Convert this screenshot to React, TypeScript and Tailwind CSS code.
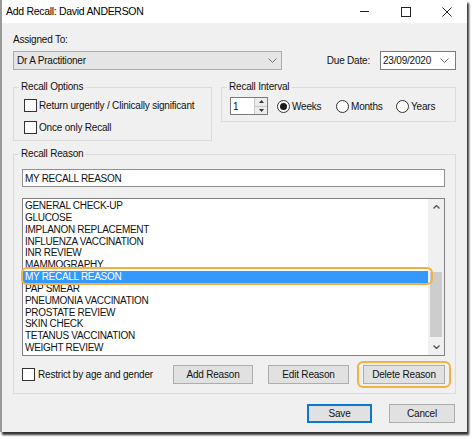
import React from "react";

const items = [
  "GENERAL CHECK-UP",
  "GLUCOSE",
  "IMPLANON REPLACEMENT",
  "INFLUENZA VACCINATION",
  "INR REVIEW",
  "MAMMOGRAPHY",
  "MY RECALL REASON",
  "PAP SMEAR",
  "PNEUMONIA VACCINATION",
  "PROSTATE REVIEW",
  "SKIN CHECK",
  "TETANUS VACCINATION",
  "WEIGHT REVIEW",
];

function Chevron({ color = "#707070" }: { color?: string }) {
  return (
    <svg width="9" height="5" viewBox="0 0 9 5" className="block">
      <polyline points="0.5,0.5 4.5,4.5 8.5,0.5" fill="none" stroke={color} strokeWidth="1" />
    </svg>
  );
}

function Checkbox() {
  return <div className="w-[13px] h-[13px] border border-[#333333] bg-white shrink-0" />;
}

function Radio({ checked }: { checked?: boolean }) {
  return (
    <div className="w-[13px] h-[13px] rounded-full border border-[#333333] bg-white shrink-0 flex items-center justify-center">
      {checked && <div className="w-[7px] h-[7px] rounded-full bg-[#1a1a1a]" />}
    </div>
  );
}

function Button({ label, w, primary }: { label: string; w: string; primary?: boolean }) {
  return (
    <div
      className={`${w} h-[19px] bg-[#e1e1e1] flex items-center justify-center text-[10px] leading-[12px] text-[#111] ${
        primary ? "border-2 border-[#0a78d7]" : "border border-[#adadad]"
      }`}
    >
      {label}
    </div>
  );
}

export default function App() {
  return (
    <div className="w-[474px] h-[439px] bg-white overflow-hidden [font-family:'Liberation_Sans',Arial,sans-serif] tracking-[-0.2px] text-[#111]">
      <div className="w-[467px] h-[432px] border-l-2 border-[#9a9a9a] flex flex-col shadow-[2px_3px_2px_rgba(0,0,0,0.8)]">
        {/* Title bar */}
        <div className="h-[23px] bg-white flex items-center shrink-0">
          <div className="pl-[4px] text-[10.5px] tracking-[-0.3px] text-black flex-1">Add Recall: David ANDERSON</div>
          <div className="flex h-full">
            <div className="w-[41px] flex items-center justify-center">
              <div className="w-[9px] h-[1px] bg-[#222]" />
            </div>
            <div className="w-[41px] flex items-center justify-center">
              <div className="w-[10px] h-[10px] border border-[#222]" />
            </div>
            <div className="w-[41px] flex items-center justify-center">
              <svg width="10" height="10" viewBox="0 0 10 10" className="block">
                <path d="M0.5 0.5 L9.5 9.5 M9.5 0.5 L0.5 9.5" stroke="#222" strokeWidth="1" />
              </svg>
            </div>
          </div>
        </div>

        {/* Body */}
        <div className="flex-1 bg-[#f0f0f0] pl-[11px] pr-[11px] flex flex-col text-[10px]">
          <div className="mt-[10px] h-[14px] leading-[14px]">Assigned To:</div>

          <div className="mt-[4px] h-[19px] flex items-center">
            <div className="w-[269px] h-[19px] bg-[#e5e5e5] border border-[#adadad] flex items-center justify-between pl-[3px] pr-[4px]">
              <span>Dr A Practitioner</span>
              <Chevron />
            </div>
            <div className="flex-1" />
            <div className="mr-[10px]">Due Date:</div>
            <div className="w-[76px] h-[19px] bg-white border border-[#7a7a7a] flex items-center justify-between pl-[2px] pr-[6px]">
              <span>23/09/2020</span>
              <Chevron />
            </div>
          </div>

          <div className="mt-[10px] flex items-start">
            <fieldset className="w-[199px] h-[61px] border border-[#dcdcdc]">
              <legend className="ml-[5px] px-[2px] leading-[14px]">Recall Options</legend>
              <div className="pl-[10px]">
                <div className="mt-[5px] h-[13px] flex items-center">
                  <Checkbox />
                  <span className="ml-[2px]">Return urgently / Clinically significant</span>
                </div>
                <div className="mt-[9px] h-[13px] flex items-center">
                  <Checkbox />
                  <span className="ml-[2px]">Once only Recall</span>
                </div>
              </div>
            </fieldset>

            <fieldset className="ml-[9px] flex-1 h-[42px] border border-[#dcdcdc]">
              <legend className="ml-[5px] px-[2px] leading-[14px]">Recall Interval</legend>
              <div className="pl-[8px] mt-[3px] flex items-center">
                <div className="w-[38px] h-[18px] bg-white border border-[#7a7a7a] flex">
                  <div className="flex-1 pl-[2px] flex items-center">1</div>
                  <div className="w-[13px] flex flex-col border-l border-[#c8c8c8]">
                    <div className="flex-1 bg-[#ececec] border-b border-[#c8c8c8] flex items-center justify-center">
                      <svg width="5" height="3" viewBox="0 0 5 3" className="block">
                        <polygon points="0,3 2.5,0 5,3" fill="#333" />
                      </svg>
                    </div>
                    <div className="flex-1 bg-[#ececec] flex items-center justify-center">
                      <svg width="5" height="3" viewBox="0 0 5 3" className="block">
                        <polygon points="0,0 2.5,3 5,0" fill="#333" />
                      </svg>
                    </div>
                  </div>
                </div>
                <div className="ml-[9px] w-[59px] flex items-center">
                  <Radio checked />
                  <span className="ml-[2px]">Weeks</span>
                </div>
                <div className="w-[60px] flex items-center">
                  <Radio />
                  <span className="ml-[2px]">Months</span>
                </div>
                <div className="flex items-center">
                  <Radio />
                  <span className="ml-[2px]">Years</span>
                </div>
              </div>
            </fieldset>
          </div>

          <fieldset className="mt-[6px] h-[247px] border border-[#dcdcdc]">
            <legend className="ml-[5px] px-[2px] leading-[14px]">Recall Reason</legend>
            <div className="pl-[8px] flex flex-col">
              <div className="mt-[8px] w-[423px] h-[18px] bg-white border border-[#8f8f8f] flex items-center pl-[2px] tracking-[-0.3px]">
                MY RECALL REASON
              </div>

              <div className="mt-[11px] w-[423px] h-[158px] bg-white border border-[#828282] flex relative">
                <div className="flex-1 pt-[1px] flex flex-col tracking-[-0.3px]">
                  {items.map((it) => (
                    <div
                      key={it}
                      className={`h-[11.85px] leading-[11.85px] pl-[2px] whitespace-nowrap ${
                        it === "MY RECALL REASON" ? "bg-[#3399ff] text-white" : ""
                      }`}
                    >
                      {it}
                    </div>
                  ))}
                </div>
                <div className="w-[16px] bg-[#f0f0f0] flex flex-col">
                  <div className="h-[16px] flex items-center justify-center">
                    <svg width="7" height="4" viewBox="0 0 7 4" className="block">
                      <polyline points="0.5,3.5 3.5,0.5 6.5,3.5" fill="none" stroke="#555" strokeWidth="1.4" />
                    </svg>
                  </div>
                  <div className="flex-1 px-[2px]">
                    <div className="mt-[57px] h-[65px] bg-[#cdcdcd]" />
                  </div>
                  <div className="h-[16px] flex items-center justify-center">
                    <svg width="7" height="4" viewBox="0 0 7 4" className="block">
                      <polyline points="0.5,0.5 3.5,3.5 6.5,0.5" fill="none" stroke="#555" strokeWidth="1.4" />
                    </svg>
                  </div>
                </div>
                <div className="absolute left-[-2px] top-[68px] w-[412px] h-[18px] border-2 border-[#f5b041] rounded-[6px]" />
              </div>

              <div className="mt-[5px] h-[27px] flex items-center">
                <div className="w-[151px] flex items-center">
                  <Checkbox />
                  <span className="ml-[3px]">Restrict by age and gender</span>
                </div>
                <Button label="Add Reason" w="w-[80px]" />
                <div className="ml-[15px]">
                  <Button label="Edit Reason" w="w-[81px]" />
                </div>
                <div className="ml-[8px] w-[94px] h-[27px] border-2 border-[#f5b041] rounded-[6px] flex items-center justify-center">
                  <Button label="Delete Reason" w="w-[82px]" />
                </div>
              </div>
            </div>
          </fieldset>

          <div className="mt-[10px] flex justify-end">
            <Button label="Save" w="w-[65px]" primary />
            <div className="ml-[17px] mr-[1px]">
              <Button label="Cancel" w="w-[66px]" />
            </div>
          </div>
        </div>
      </div>
    </div>
  );
}
